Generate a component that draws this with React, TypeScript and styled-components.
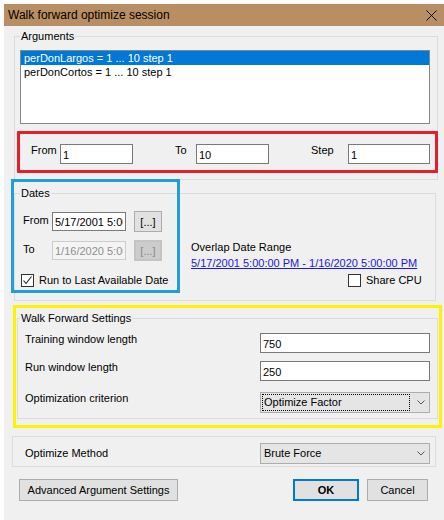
import * as React from 'react';
import styled, { createGlobalStyle } from 'styled-components';

const GlobalStyle = createGlobalStyle`
  * { box-sizing: border-box; }
  body {
    margin: 0;
    background: #ffffff;
    font-family: 'Liberation Sans', Arial, sans-serif;
    font-size: 11px;
    color: #000;
  }
`;

const Window = styled.div`
  margin: 4px 0 0 4px;
  width: 440px;
  height: 516px;
  background: #f0f0f0;
  display: flex;
  flex-direction: column;
  overflow: hidden;
`;

const TitleBar = styled.div`
  height: 22px;
  flex-shrink: 0;
  background: #b98e62;
  display: flex;
  align-items: center;
  justify-content: space-between;
  padding: 0 7px 0 4px;
  font-size: 12px;
`;

const Body = styled.div`
  display: flex;
  flex-direction: column;
  align-items: flex-start;
`;

interface BoxProps {
  $w: number;
  $pad: string;
  $m?: string;
}
const GroupBox = styled.fieldset<BoxProps>`
  margin: ${({ $m }) => $m || '0'};
  min-width: 0;
  width: ${({ $w }) => $w}px;
  padding: ${({ $pad }) => $pad};
  border: 1px solid #dcdcdc;
`;

const Legend = styled.legend`
  padding: 0 1px;
  font-size: 11px;
  line-height: 13px;
`;

const ListBox = styled.div`
  height: 74px;
  border: 1px solid #828790;
  background: #fff;
`;

const ListItem = styled.div<{ $selected?: boolean }>`
  height: 14px;
  line-height: 14px;
  padding-left: 3px;
  background: ${({ $selected }) => ($selected ? '#0078d7' : 'transparent')};
  color: ${({ $selected }) => ($selected ? '#fff' : '#000')};
`;

// annotation frames drawn over the dialog
const RedFrame = styled.div`
  margin: 7px -8px 0 -3px;
  height: 42px;
  border: 3px solid #e3202a;
  display: flex;
  align-items: flex-start;
  padding: 10px 0 0 11px;
`;

const BlueFrame = styled.div`
  position: absolute;
  top: -8px;
  left: -3px;
  width: 169px;
  height: 114px;
  border: 3px solid #1e9fda;
  pointer-events: none;
`;

const YellowFrame = styled.div`
  margin: 4px 0 0 9px;
  width: 429px;
  border: 3px solid #fff200;
  padding: 4px 1px 6px 1px;
`;

const Label = styled.span<{ $w?: number; $ml?: number; $mt?: number }>`
  flex-shrink: 0;
  width: ${({ $w }) => ($w ? `${$w}px` : 'auto')};
  margin-left: ${({ $ml }) => $ml || 0}px;
  margin-top: ${({ $mt }) => $mt || 0}px;
  line-height: 13px;
  white-space: nowrap;
`;

const TextBox = styled.input<{ $w: number; $h?: number }>`
  flex-shrink: 0;
  width: ${({ $w }) => $w}px;
  height: ${({ $h }) => $h || 20}px;
  border: 1px solid #7a7a7a;
  background: #fff;
  padding: 1px 2px 0;
  margin: 0;
  font-family: 'Liberation Sans', Arial, sans-serif;
  font-size: 11px;
  color: #000;
  outline: none;
  &:disabled {
    border-color: #cccccc;
    background: #f4f4f4;
    color: #8f8f8f;
  }
`;

const Button = styled.button<{ $w: number; $h?: number; $primary?: boolean; $ml?: number }>`
  flex-shrink: 0;
  width: ${({ $w }) => $w}px;
  height: ${({ $h }) => $h || 22}px;
  margin: 0 0 0 ${({ $ml }) => $ml || 0}px;
  padding: 0;
  background: #e1e1e1;
  border: ${({ $primary }) => ($primary ? '2px solid #0078d7' : '1px solid #adadad')};
  font-family: 'Liberation Sans', Arial, sans-serif;
  font-size: 11px;
  font-weight: ${({ $primary }) => ($primary ? 'bold' : 'normal')};
  color: #000;
  &:disabled {
    background: #cccccc;
    border: 2px solid #c4c4c4;
    color: #8a8a8a;
  }
`;

const DatesWrap = styled.div`
  position: relative;
  margin: 7px 0 0 10px;
`;

const DatesContent = styled.div`
  display: flex;
`;

const Column = styled.div<{ $w?: number; $ml?: number; $pt?: number }>`
  display: flex;
  flex-direction: column;
  align-items: flex-start;
  flex-shrink: 0;
  width: ${({ $w }) => ($w ? `${$w}px` : 'auto')};
  margin-left: ${({ $ml }) => $ml || 0}px;
  padding-top: ${({ $pt }) => $pt || 0}px;
`;

const DateRow = styled.div<{ $mt?: number }>`
  display: flex;
  align-items: center;
  height: 21px;
  margin-top: ${({ $mt }) => $mt || 0}px;
`;

const CheckRow = styled.div<{ $mt?: number; $ml?: number }>`
  display: flex;
  align-items: center;
  height: 15px;
  margin-top: ${({ $mt }) => $mt || 0}px;
  margin-left: ${({ $ml }) => $ml || 0}px;
`;

const CheckBox = styled.span<{ $ml?: number }>`
  width: 13px;
  height: 13px;
  flex-shrink: 0;
  margin-left: ${({ $ml }) => $ml || 0}px;
  border: 1px solid #333;
  background: #fff;
  display: inline-flex;
  align-items: center;
  justify-content: center;
`;

const Link = styled.a`
  margin-top: 3px;
  line-height: 13px;
  color: #1a1ae0;
  text-decoration: underline;
  white-space: nowrap;
`;

const SettingRow = styled.div<{ $mt?: number; $align?: string }>`
  display: flex;
  justify-content: space-between;
  align-items: ${({ $align }) => $align || 'flex-start'};
  margin-top: ${({ $mt }) => $mt || 0}px;
`;

const Combo = styled.div`
  width: 170px;
  height: 21px;
  flex-shrink: 0;
  background: #e5e5e5;
  border: 1px solid #adadad;
  display: flex;
  align-items: center;
  padding: 0 4px 0 1px;
`;

const ComboText = styled.span<{ $focused?: boolean }>`
  flex: 1;
  height: 17px;
  line-height: 15px;
  padding-left: 1px;
  border: 1px ${({ $focused }) => ($focused ? 'dotted #000' : 'solid transparent')};
  margin-right: 7px;
`;

const ButtonBar = styled.div`
  align-self: stretch;
  display: flex;
  justify-content: space-between;
  margin-top: 12px;
  padding: 0 16px 0 15px;
`;

const ButtonGroup = styled.div`
  display: flex;
`;

const CloseGlyph = () => (
  <svg width="11" height="11" viewBox="0 0 11 11">
    <path d="M0.5 0.5 L10.5 10.5 M10.5 0.5 L0.5 10.5" stroke="#000" strokeWidth="1" />
  </svg>
);

const Chevron = () => (
  <svg width="8" height="5" viewBox="0 0 8 5">
    <path d="M0.5 0.5 L4 4 L7.5 0.5" stroke="#555" strokeWidth="1" fill="none" />
  </svg>
);

const Check = ({ checked, ml }: { checked?: boolean; ml?: number }) => (
  <CheckBox $ml={ml}>
    {checked && (
      <svg width="11" height="11" viewBox="0 0 11 11">
        <path d="M1.5 5.5 L4 8.5 L9.5 1.5" stroke="#222" strokeWidth="1.1" fill="none" />
      </svg>
    )}
  </CheckBox>
);

export default function App() {
  return (
    <>
      <GlobalStyle />
      <Window>
        <TitleBar>
          <span>Walk forward optimize session</span>
          <CloseGlyph />
        </TitleBar>
        <Body>
          <GroupBox $w={424} $pad="7px 7px 6px 5px" $m="4px 0 0 10px">
            <Legend>Arguments</Legend>
            <ListBox>
              <ListItem $selected>perDonLargos = 1 ... 10 step 1</ListItem>
              <ListItem>perDonCortos = 1 ... 10 step 1</ListItem>
            </ListBox>
            <RedFrame>
              <Label $w={29}>From</Label>
              <TextBox $w={73} defaultValue="1" />
              <Label $w={21} $ml={42}>To</Label>
              <TextBox $w={73} defaultValue="10" />
              <Label $w={37} $ml={42}>Step</Label>
              <TextBox $w={82} defaultValue="1" />
            </RedFrame>
          </GroupBox>

          <DatesWrap>
            <GroupBox $w={422} $pad="11px 0 12px 5px">
              <Legend>Dates</Legend>
              <DatesContent>
                <Column $w={142}>
                  <DateRow>
                    <Label $w={29} $ml={3} $mt={-3}>From</Label>
                    <TextBox $w={74} $h={19} defaultValue="5/17/2001 5:00:00 PM" />
                    <Button $w={28} $h={21} $ml={8}>[...]</Button>
                  </DateRow>
                  <DateRow $mt={8}>
                    <Label $w={29} $ml={3} $mt={-3}>To</Label>
                    <TextBox $w={74} $h={19} defaultValue="1/16/2020 5:00:00 PM" disabled />
                    <Button $w={28} $h={21} $ml={8} disabled>[...]</Button>
                  </DateRow>
                  <CheckRow $mt={12}>
                    <Check checked ml={1} />
                    <Label $ml={5}>Run to Last Available Date</Label>
                  </CheckRow>
                </Column>
                <Column $ml={29} $pt={30}>
                  <Label>Overlap Date Range</Label>
                  <Link>5/17/2001 5:00:00 PM - 1/16/2020 5:00:00 PM</Link>
                  <CheckRow $mt={3} $ml={157}>
                    <Check />
                    <Label $ml={5}>Share CPU</Label>
                  </CheckRow>
                </Column>
              </DatesContent>
            </GroupBox>
            <BlueFrame />
          </DatesWrap>

          <YellowFrame>
            <GroupBox $w={421} $pad="8px 7px 5px 2px">
              <Legend>Walk Forward Settings</Legend>
              <SettingRow>
                <Label $ml={5}>Training window length</Label>
                <TextBox $w={170} defaultValue="750" />
              </SettingRow>
              <SettingRow $mt={8}>
                <Label $ml={5}>Run window length</Label>
                <TextBox $w={170} defaultValue="250" />
              </SettingRow>
              <SettingRow $mt={11}>
                <Label $ml={5}>Optimization criterion</Label>
                <Combo>
                  <ComboText $focused>Optimize Factor</ComboText>
                  <Chevron />
                </Combo>
              </SettingRow>
            </GroupBox>
          </YellowFrame>

          <GroupBox $w={424} $pad="6px 5px 2px 12px" $m="8px 0 0 8px">
            <SettingRow $align="center">
              <Label>Optimize Method</Label>
              <Combo>
                <ComboText>Brute Force</ComboText>
                <Chevron />
              </Combo>
            </SettingRow>
          </GroupBox>

          <ButtonBar>
            <Button $w={159}>Advanced Argument Settings</Button>
            <ButtonGroup>
              <Button $w={66} $primary>OK</Button>
              <Button $w={61} $ml={8}>Cancel</Button>
            </ButtonGroup>
          </ButtonBar>
        </Body>
      </Window>
    </>
  );
}
